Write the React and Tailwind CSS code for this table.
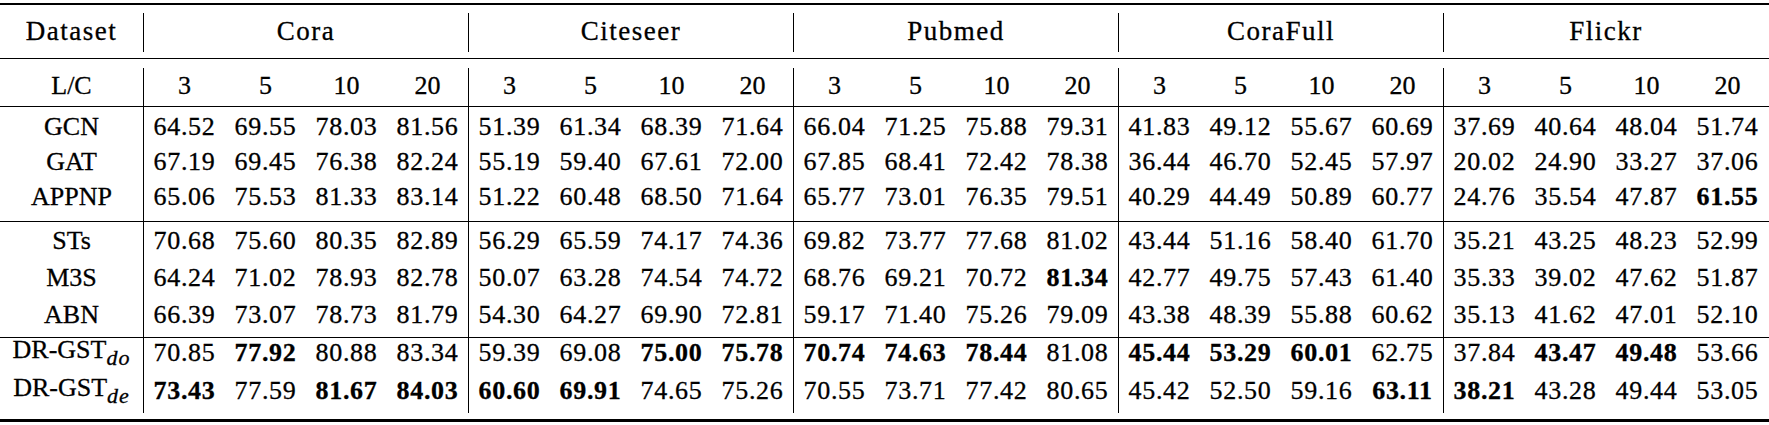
const groups = ['Cora', 'Citeseer', 'Pubmed', 'CoraFull', 'Flickr'];

// "*" marks the best value in a column (bold)
const sections = [
    [
        { name: 'GCN', h: 'h-[37px]', pad: 'pt-[2px]', vals: '64.52 69.55 78.03 81.56 51.39 61.34 68.39 71.64 66.04 71.25 75.88 79.31 41.83 49.12 55.67 60.69 37.69 40.64 48.04 51.74' },
        { name: 'GAT', h: 'h-[35px]', pad: '', vals: '67.19 69.45 76.38 82.24 55.19 59.40 67.61 72.00 67.85 68.41 72.42 78.38 36.44 46.70 52.45 57.97 20.02 24.90 33.27 37.06' },
        { name: 'APPNP', h: 'h-[42px]', pad: 'pb-[6px]', vals: '65.06 75.53 81.33 83.14 51.22 60.48 68.50 71.64 65.77 73.01 76.35 79.51 40.29 44.49 50.89 60.77 24.76 35.54 47.87 *61.55' },
    ],
    [
        { name: 'STs', h: 'h-[37px]', pad: '', vals: '70.68 75.60 80.35 82.89 56.29 65.59 74.17 74.36 69.82 73.77 77.68 81.02 43.44 51.16 58.40 61.70 35.21 43.25 48.23 52.99' },
        { name: 'M3S', h: 'h-[37px]', pad: '', vals: '64.24 71.02 78.93 82.78 50.07 63.28 74.54 74.72 68.76 69.21 70.72 *81.34 42.77 49.75 57.43 61.40 35.33 39.02 47.62 51.87' },
        { name: 'ABN', h: 'h-[41px]', pad: 'pb-[3px]', vals: '66.39 73.07 78.73 81.79 54.30 64.27 69.90 72.81 59.17 71.40 75.26 79.09 43.38 48.39 55.88 60.62 35.13 41.62 47.01 52.10' },
    ],
    [
        { name: 'DR-GST', sub: 'do', h: 'h-[34px]', pad: 'pb-[5px]', vals: '70.85 *77.92 80.88 83.34 59.39 69.08 *75.00 *75.78 *70.74 *74.63 *78.44 81.08 *45.44 *53.29 *60.01 62.75 37.84 *43.47 *49.48 53.66' },
        { name: 'DR-GST', sub: 'de', h: 'h-[41px]', pad: 'pb-[3px]', vals: '*73.43 77.59 *81.67 *84.03 *60.60 *69.91 74.65 75.26 70.55 73.71 77.42 80.65 45.42 52.50 59.16 *63.11 *38.21 43.28 49.44 53.05' },
    ],
];

function Num({ v }) {
    const bold = v.startsWith('*');
    return (
        <span className={`tracking-[0.7px] ${bold ? 'font-bold' : ''}`}>{bold ? v.slice(1) : v}</span>
    );
}

function DataRow({ row }) {
    const vals = row.vals.split(' ');
    return (
        <div className={`flex ${row.h}`}>
            <div className={`w-[143px] flex items-center justify-center ${row.pad}`}>
                <span>
                    {row.name}
                    {row.sub && <span className="italic text-[22px] tracking-[1px] align-[-7px]">{row.sub}</span>}
                </span>
            </div>
            {groups.map((g, gi) => (
                <div key={g} className="flex w-[325px] border-l border-black">
                    {vals.slice(gi * 4, gi * 4 + 4).map((v, i) => (
                        <div key={i} className={`w-[81px] flex items-center justify-center ${row.pad}`}>
                            <Num v={v} />
                        </div>
                    ))}
                </div>
            ))}
        </div>
    );
}

export default function App() {
    return (
        <div className="w-[1769px] h-[425px] bg-white text-black text-[26px] leading-none font-[family-name:'Liberation_Serif',serif] [-webkit-text-stroke:0.3px_black] overflow-hidden">
            <div className="mt-[3px] h-[2px] bg-black" />

            {/* Dataset header */}
            <div className="flex h-[53px] text-[27px] tracking-[1.5px]">
                <div className="w-[143px] flex items-center justify-center">Dataset</div>
                {groups.map((g) => (
                    <div key={g} className="flex w-[325px]">
                        <div className="w-px h-[39px] mt-[8px] bg-black" />
                        <div className="flex-1 flex items-center justify-center">{g}</div>
                    </div>
                ))}
            </div>
            <div className="h-px bg-black" />

            {/* L/C row */}
            <div className="flex h-[47px]">
                <div className="w-[143px] flex items-center justify-center pt-[6px]">L/C</div>
                {groups.map((g) => (
                    <div key={g} className="flex w-[325px]">
                        <div className="w-px mt-[9px] bg-black" />
                        {['3', '5', '10', '20'].map((c) => (
                            <div key={c} className="w-[81px] flex items-center justify-center pt-[6px]">{c}</div>
                        ))}
                    </div>
                ))}
            </div>

            {sections.map((rows, si) => (
                <div key={si}>
                    <div className="h-px bg-black" />
                    {rows.map((row, ri) => (
                        <DataRow key={ri} row={row} />
                    ))}
                </div>
            ))}

            <div className="h-[6px]" />
            <div className="h-[3px] bg-black" />
        </div>
    );
}
